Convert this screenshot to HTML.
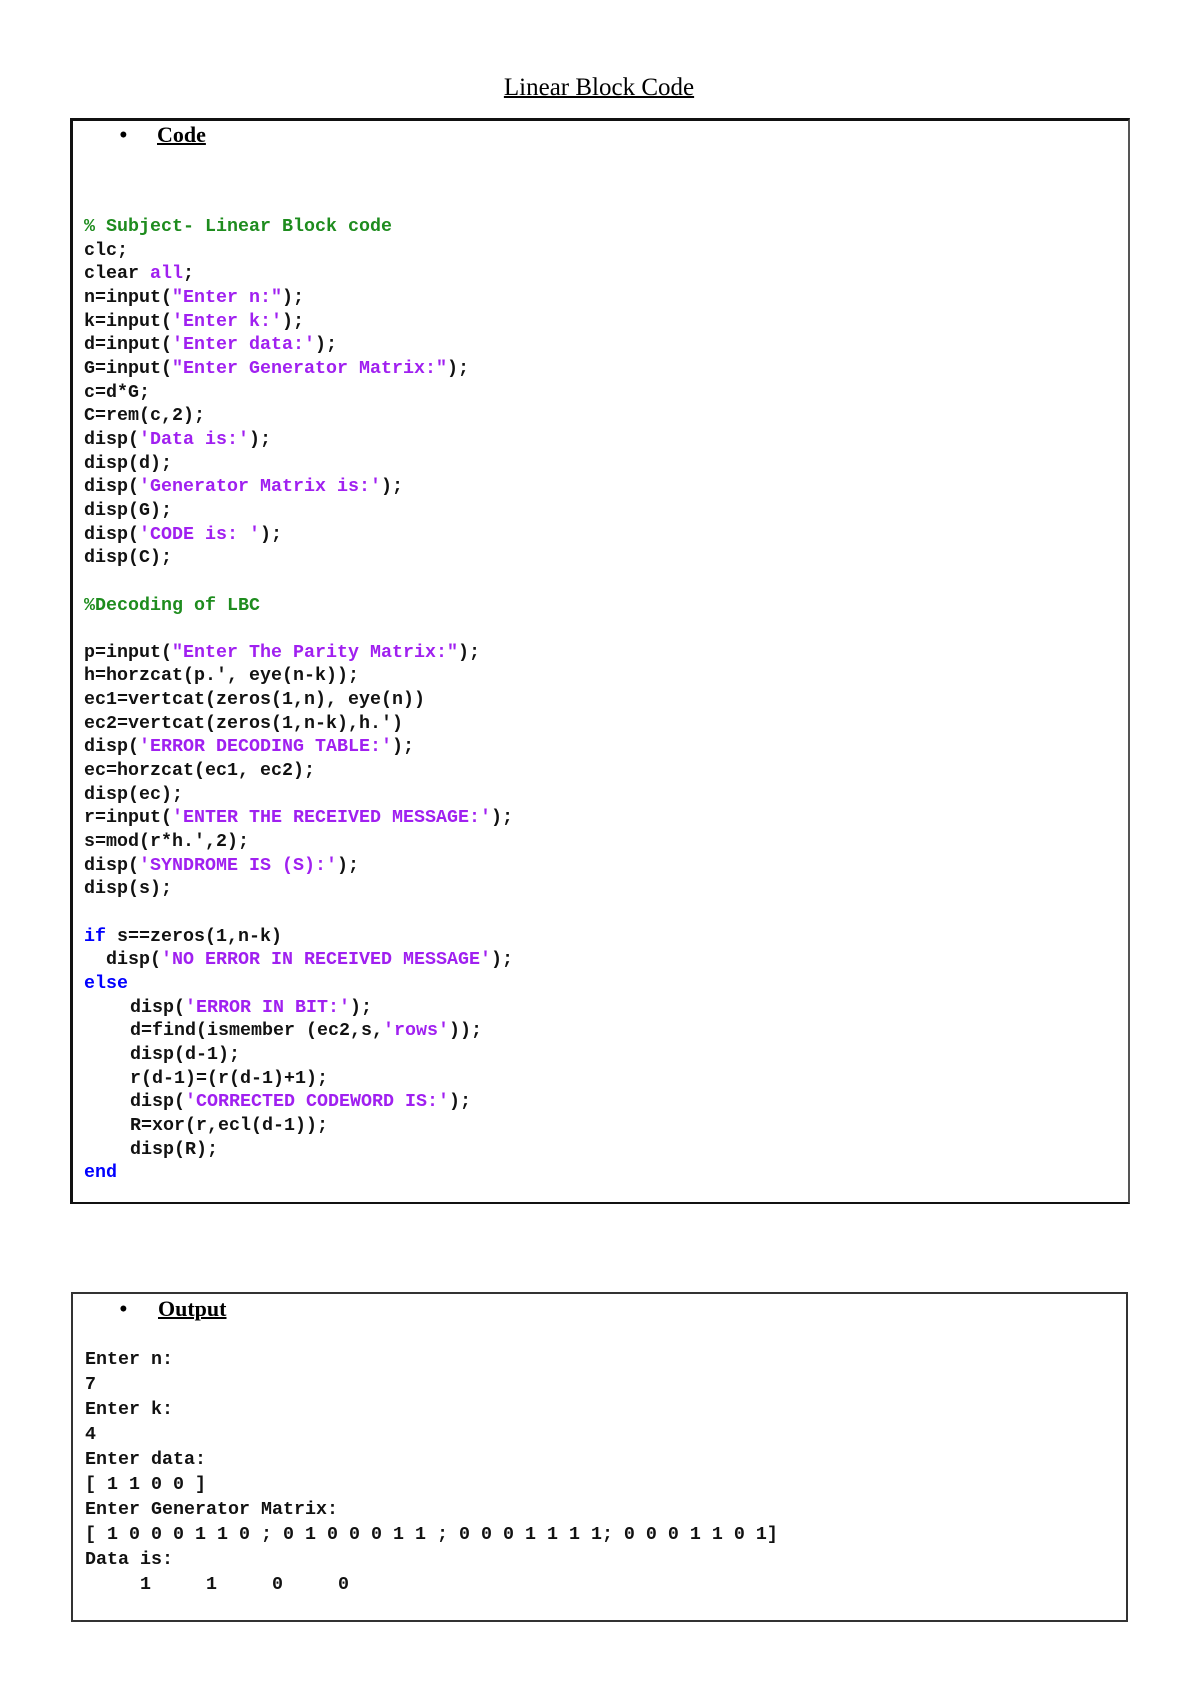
<!DOCTYPE html>
<html><head><meta charset="utf-8"><style>
html,body{margin:0;padding:0;background:#fff;}
body{width:1200px;height:1696px;position:relative;overflow:hidden;}
.t{position:absolute;font-family:"Liberation Serif",serif;color:#000;}
pre{position:absolute;margin:0;font-family:"Liberation Mono",monospace;font-size:18.33px;font-weight:bold;color:#111;white-space:pre;}
.g{color:#1e8c1e}.p{color:#a020f0}.b{color:#0000ff}
.box{position:absolute;box-sizing:border-box;}
.ind{padding-left:46px}
</style></head><body>
<div class="t" style="left:0;width:1198px;text-align:center;top:74px;font-size:25px;text-decoration:underline;text-decoration-thickness:2px;">Linear Block Code</div>
<div class="box" style="left:70px;top:118px;width:1060px;height:1086px;border:2px solid #111;border-top-width:3px;border-left-width:3px;border-right-color:#555;"></div>
<div class="t" style="left:119px;top:122px;font-size:25px;">•</div>
<div class="t" style="left:157px;top:122px;font-size:22px;font-weight:bold;text-decoration:underline;text-decoration-thickness:2px;">Code</div>
<pre style="left:84px;top:215px;line-height:23.65px;"><span class="g">% Subject- Linear Block code</span>
clc;
clear <span class="p">all</span>;
n=input(<span class="p">"Enter n:"</span>);
k=input(<span class="p">'Enter k:'</span>);
d=input(<span class="p">'Enter data:'</span>);
G=input(<span class="p">"Enter Generator Matrix:"</span>);
c=d*G;
C=rem(c,2);
disp(<span class="p">'Data is:'</span>);
disp(d);
disp(<span class="p">'Generator Matrix is:'</span>);
disp(G);
disp(<span class="p">'CODE is: '</span>);
disp(C);

<span class="g">%Decoding of LBC</span>

p=input(<span class="p">"Enter The Parity Matrix:"</span>);
h=horzcat(p.', eye(n-k));
ec1=vertcat(zeros(1,n), eye(n))
ec2=vertcat(zeros(1,n-k),h.')
disp(<span class="p">'ERROR DECODING TABLE:'</span>);
ec=horzcat(ec1, ec2);
disp(ec);
r=input(<span class="p">'ENTER THE RECEIVED MESSAGE:'</span>);
s=mod(r*h.',2);
disp(<span class="p">'SYNDROME IS (S):'</span>);
disp(s);

<span class="b">if</span> s==zeros(1,n-k)
  disp(<span class="p">'NO ERROR IN RECEIVED MESSAGE'</span>);
<span class="b">else</span>
<span class="ind">disp(<span class="p">'ERROR IN BIT:'</span>);</span>
<span class="ind">d=find(ismember (ec2,s,<span class="p">'rows'</span>));</span>
<span class="ind">disp(d-1);</span>
<span class="ind">r(d-1)=(r(d-1)+1);</span>
<span class="ind">disp(<span class="p">'CORRECTED CODEWORD IS:'</span>);</span>
<span class="ind">R=xor(r,ecl(d-1));</span>
<span class="ind">disp(R);</span>
<span class="b">end</span></pre>
<div class="box" style="left:71px;top:1292px;width:1057px;height:330px;border:2px solid #333;"></div>
<div class="t" style="left:119px;top:1296px;font-size:25px;">•</div>
<div class="t" style="left:158px;top:1296px;font-size:22px;font-weight:bold;text-decoration:underline;text-decoration-thickness:2px;">Output</div>
<pre style="left:85px;top:1347px;line-height:25px;">Enter n:
7
Enter k:
4
Enter data:
[ 1 1 0 0 ]
Enter Generator Matrix:
[ 1 0 0 0 1 1 0 ; 0 1 0 0 0 1 1 ; 0 0 0 1 1 1 1; 0 0 0 1 1 0 1]
Data is:
     1     1     0     0</pre>
</body></html>
